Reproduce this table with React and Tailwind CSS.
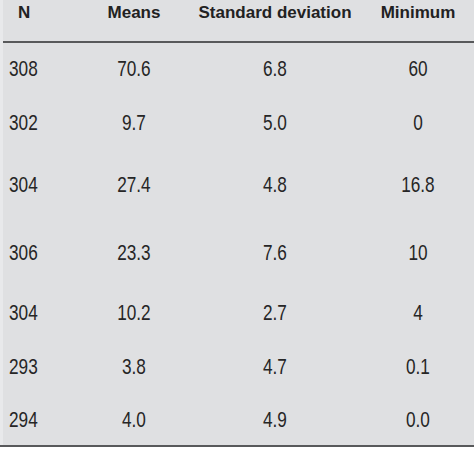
const rows = [
	{ n: "308", mean: "70.6", sd: "6.8", min: "60", h: "h-[53px]" },
	{ n: "302", mean: "9.7", sd: "5.0", min: "0", h: "h-[55px]" },
	{ n: "304", mean: "27.4", sd: "4.8", min: "16.8", h: "h-[68px]" },
	{ n: "306", mean: "23.3", sd: "7.6", min: "10", h: "h-[68px]" },
	{ n: "304", mean: "10.2", sd: "2.7", min: "4", h: "h-[52px]" },
	{ n: "293", mean: "3.8", sd: "4.7", min: "0.1", h: "h-[56px]" },
	{ n: "294", mean: "4.0", sd: "4.9", min: "0.0", h: "h-[50px]" },
];

function Num({ children, left }) {
	return (
		<span className={`inline-block scale-x-[0.8] ${left ? "origin-left" : "origin-center"}`}>{children}</span>
	);
}

export default function App() {
	return (
		<div
			className="w-[474px] h-[474px] bg-white text-[#262626]"
			style={{ fontFamily: '"Liberation Sans", Arial, sans-serif' }}
		>
			<div className="bg-[#dfe0e2] border-l-[3px] border-[#e8e9eb]">
				<div className="grid grid-cols-[77px_108px_174px_1fr] h-[41px] pb-[17px] items-center text-[17px] font-bold text-[#222]">
					<div className="pl-[15px]">N</div>
					<div className="text-center">Means</div>
					<div className="text-center">Standard deviation</div>
					<div className="text-center">Minimum</div>
				</div>
				<div className="h-[2px] bg-[#58595b]" />
				{rows.map((r, i) => (
					<div key={i} className={`grid grid-cols-[77px_108px_174px_1fr] items-center text-[21.5px] ${r.h}`}>
						<div className="pl-[6px]">
							<Num left>{r.n}</Num>
						</div>
						<div className="text-center">
							<Num>{r.mean}</Num>
						</div>
						<div className="text-center">
							<Num>{r.sd}</Num>
						</div>
						<div className="text-center">
							<Num>{r.min}</Num>
						</div>
					</div>
				))}
			</div>
			<div className="h-[2px] bg-[#58595b]" />
		</div>
	);
}
